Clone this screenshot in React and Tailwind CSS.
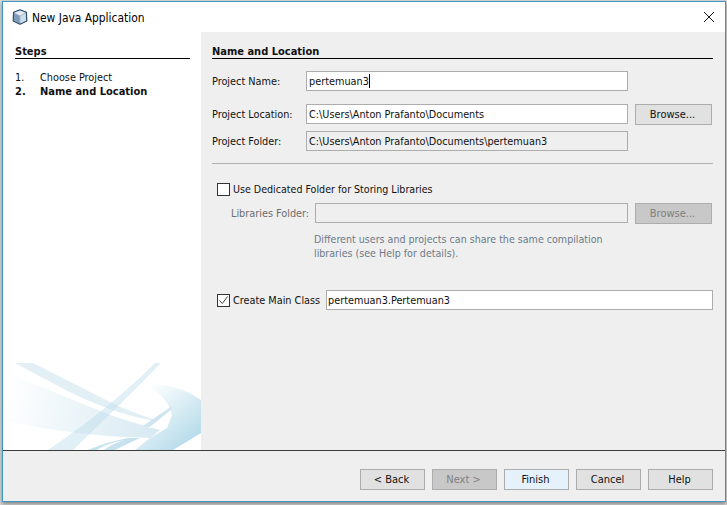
const font = { fontFamily: '"DejaVu Sans Condensed","DejaVu Sans",sans-serif' };

function Field({ w, value, white, caret }) {
  return (
    <div className={`h-5 border border-[#adadad] flex items-center pl-[2px] pt-[2px] text-[#111] whitespace-nowrap ${white ? 'bg-white' : 'bg-[#efefef]'} ${w}`}>
      <span>{value}</span>
      {caret && <span className="w-px h-[14px] bg-black -mt-[2px]" />}
    </div>
  );
}

function Btn({ children, cls = 'bg-[#e1e1e1] text-[#111]', w = 'w-[65px]' }) {
  return (
    <div className={`h-[21px] ${w} border border-[#adadad] flex items-center justify-center pr-[2px] text-[11px] ${cls}`}>
      {children}
    </div>
  );
}

function Art() {
  return (
    <svg width="198" height="87" viewBox="3 363 198 87" className="absolute left-0 bottom-0">
      <defs>
        <linearGradient id="g1" gradientUnits="userSpaceOnUse" x1="3" y1="400" x2="160" y2="430">
          <stop offset="0" stopColor="#ffffff" />
          <stop offset="1" stopColor="#d6e9f2" />
        </linearGradient>
        <linearGradient id="g2" gradientUnits="userSpaceOnUse" x1="150" y1="385" x2="195" y2="440">
          <stop offset="0" stopColor="#ffffff" />
          <stop offset="1" stopColor="#b5dbea" />
        </linearGradient>
      </defs>
      <path d="M3 371 L100 411 Q125 421 160 430 L150 438 Q70 436 3 420 Z" fill="url(#g1)" />
      <path d="M15 363 L33 363 L108 401 Q130 412 156 420 L150 420 Q128 416 107 408 Q80 398 60 387 Z" fill="#e2f0f6" />
      <path d="M155 363 L161 363 Q120 405 73 450 L48 450 Q110 408 155 363 Z" fill="#bcdcea" opacity="0.45" />
      <path d="M88 450 Q110 441 128 438 L140 438 Q125 445 115 450 L104 450 Q112 444 124 440 Q105 444 97 450 Z" fill="#c6e2ee" />
      <path d="M147 386 Q160 384 170 386 Q187 390 201 400 L201 433 L173 450 L135 450 L150 438 L167 428 L172 415 Q170 405 163 398 Q157 391 147 386 Z" fill="url(#g2)" />
      <path d="M143 426 L172 406 L172 409 L150 427 Z" fill="#cfe6f0" />
      <path d="M148 428 L158 421 L164 421 L156 428 Z M158 429 L170 418 L167 427 L164 429 Z" fill="#ffffff" />
    </svg>
  );
}

function CubeIcon() {
  return (
    <svg width="16" height="16" viewBox="0 0 16 16">
      <path d="M8 .8 L14.4 3.2 L14.8 12 L8 15.3 L1.2 12 L1.6 3.2 Z" fill="#9fb8cf" stroke="#2f4a6b" strokeWidth="1.2" strokeLinejoin="round" />
      <path d="M8 1.8 L13.4 3.8 L8 6.5 L2.6 3.8 Z" fill="#e4edf4" />
      <path d="M8.5 7 L13.7 4.6 L14 11.5 L8.5 14.3 Z" fill="#cfdde8" />
      <path d="M7.5 7 L2.3 4.6 L2 11.5 L7.5 14.3 Z" fill="#7d9ab8" />
    </svg>
  );
}

export default function App() {
  return (
    <div className="w-[727px] h-[505px] bg-[#d8d8d8] pl-[2px] pt-px pr-[1px] pb-[3px] overflow-hidden text-[10.8px] leading-[14px]" style={font}>
      <div className="w-full h-full border border-[#3f96c2] bg-white flex flex-col text-[#111] shadow-[0_2px_4px_rgba(0,0,0,0.4)]">
        {/* title */}
        <div className="h-[30px] flex items-center shrink-0 pl-[9px] pr-[10px] bg-white">
          <CubeIcon />
          <span className="ml-[4px] pt-px text-[11.9px] text-black">New Java Application</span>
          <svg className="ml-auto" width="12" height="12" viewBox="0 0 12 12">
            <path d="M1 1 L11 11 M11 1 L1 11" stroke="#111" strokeWidth="1" />
          </svg>
        </div>
        {/* body */}
        <div className="flex flex-1 min-h-0">
          {/* steps */}
          <div className="w-[198px] shrink-0 bg-white relative pl-3 pr-[11px]">
            <div className="font-bold text-[11px] leading-[12px] pt-[14px] border-b border-black">Steps</div>
            <div className="mt-3 flex"><span className="w-[25px]">1.</span><span>Choose Project</span></div>
            <div className="flex font-bold text-[11px]"><span className="w-[25px]">2.</span><span>Name and Location</span></div>
            <Art />
          </div>
          {/* form */}
          <div className="flex-1 bg-[#efefef] pl-[11px] pr-3">
            <div className="font-bold text-[11px] leading-[12px] pt-[14px] border-b border-black">Name and Location</div>
            <div className="mt-3 flex items-start">
              <span className="w-[94px] leading-[22px] h-5 whitespace-nowrap">Project Name:</span>
              <Field w="w-[322px]" white value="pertemuan3" caret />
            </div>
            <div className="mt-[13px] flex items-start">
              <span className="w-[94px] leading-[22px] h-5 whitespace-nowrap">Project Location:</span>
              <Field w="w-[322px]" white value="C:\Users\Anton Prafanto\Documents" />
              <Btn w="w-[77px] ml-[7px]">Browse...</Btn>
            </div>
            <div className="mt-[6px] flex items-start">
              <span className="w-[94px] leading-[22px] h-5 whitespace-nowrap">Project Folder:</span>
              <Field w="w-[322px]" value="C:\Users\Anton Prafanto\Documents\pertemuan3" />
            </div>
            <div className="mt-3 h-px bg-[#b0b0b0]" />
            <div className="mt-[18px] flex items-center ml-[5px] h-[14px]">
              <div className="w-[13px] h-[13px] border border-[#333] bg-white" />
              <span className="ml-[3px] text-[10.6px] whitespace-nowrap">Use Dedicated Folder for Storing Libraries</span>
            </div>
            <div className="mt-[7px] flex items-start text-[#6d6d6d]">
              <span className="w-[103px] pl-[19px] leading-[22px] h-5 whitespace-nowrap">Libraries Folder:</span>
              <Field w="w-[313px]" value="" />
              <Btn w="w-[77px] ml-[7px]" cls="bg-[#c8c8c8] text-[#808080]">Browse...</Btn>
            </div>
            <div className="mt-2 ml-[102px] text-[10.6px] text-[#6d7a88] whitespace-nowrap">
              Different users and projects can share the same compilation<br />libraries (see Help for details).
            </div>
            <div className="mt-[30px] flex items-center ml-[5px]">
              <div className="w-[13px] h-[13px] border border-[#333] bg-white flex items-center justify-center">
                <svg width="11" height="11" viewBox="0 0 11 11"><path d="M1.5 5.5 L4.3 8.5 L9.5 1.5" fill="none" stroke="#444" strokeWidth="1" /></svg>
              </div>
              <span className="ml-[3px] pt-[2px] w-[93px] whitespace-nowrap">Create Main Class</span>
              <div className="h-5 flex-1 bg-white border border-[#adadad] flex items-center pl-px pt-[2px]">pertemuan3.Pertemuan3</div>
            </div>
          </div>
        </div>
        {/* footer */}
        <div className="h-[51px] shrink-0 bg-[#efefef] border-t border-[#3c3c3c] flex items-start justify-end pt-[18px] pr-3 gap-[7px]">
          <Btn>&lt; Back</Btn>
          <Btn cls="bg-[#c8c8c8] text-[#808080]">Next &gt;</Btn>
          <Btn cls="border-[#0078d7] bg-[#e5f1fb] text-[#111]">Finish</Btn>
          <Btn>Cancel</Btn>
          <Btn>Help</Btn>
        </div>
      </div>
    </div>
  );
}
